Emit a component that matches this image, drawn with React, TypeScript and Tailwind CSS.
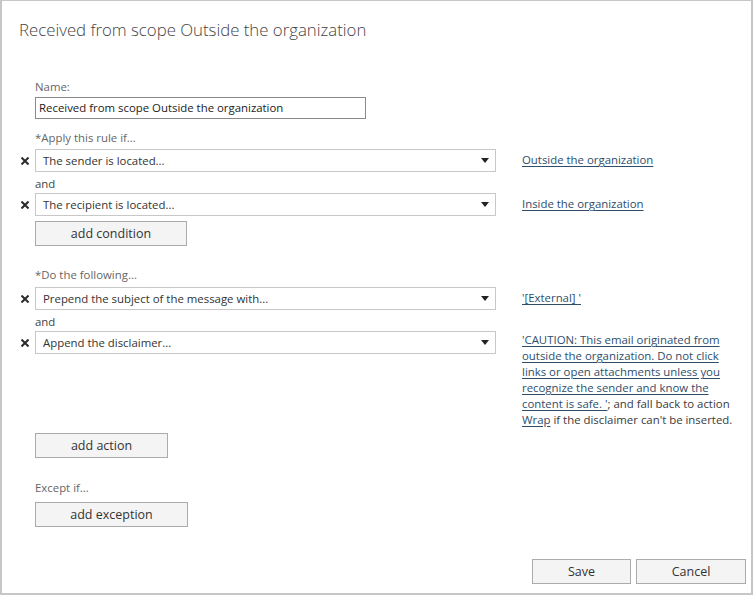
import React from 'react';

const font = { fontFamily: '"Open Sans", "Noto Sans", sans-serif' };

function RemoveMark() {
  return (
    <svg width="8" height="8" viewBox="0 0 8 8" className="block">
      <path d="M1.2 1.2 L6.8 6.8 M6.8 1.2 L1.2 6.8" stroke="#2b2b2b" strokeWidth="2" strokeLinecap="square" />
    </svg>
  );
}

function Select({ label }: { label: string }) {
  return (
    <div className="flex h-[23px] w-[461px] items-center justify-between border border-[#c8c8c8] bg-white pl-[7px] pr-[6px] text-[11.4px] text-[#333]">
      <span>{label}</span>
      <svg width="8" height="5" viewBox="0 0 8 5" className="block">
        <path d="M0 0 H8 L4 5 Z" fill="#222" />
      </svg>
    </div>
  );
}

function Row({ label, top = 'pt-[3px]', children }: { label: string; top?: string; children?: React.ReactNode }) {
  return (
    <div className="flex items-start">
      <div className="flex h-[23px] w-[33px] items-center pl-[19px]">
        <RemoveMark />
      </div>
      <Select label={label} />
      <div className={`ml-[26px] ${top} text-[11.4px] leading-[16px] text-[#3a3a3a]`}>{children}</div>
    </div>
  );
}

function Link({ children }: { children: React.ReactNode }) {
  return <span className="text-[#2e4e6b] underline underline-offset-2">{children}</span>;
}

function GreyButton({ label, width }: { label: string; width: string }) {
  return (
    <button className={`block h-[25px] ${width} border border-[#ababab] bg-[#f4f4f4] text-[12.5px] leading-[23px] text-[#333]`}>
      {label}
    </button>
  );
}

function Label({ text, color = 'text-[#666]' }: { text: string; color?: string }) {
  return <div className={`pl-[33px] text-[11.4px] leading-[16px] ${color}`}>{text}</div>;
}

export default function App() {
  return (
    <div style={font} className="flex h-[595px] w-[753px] flex-col border-t border-l-2 border-r-2 border-b-2 border-[#c6c6c6] bg-white">
      <h1 className="pl-[17px] pt-[16px] text-[16.8px] font-light leading-[26px] text-[#444]">
        Received from scope Outside the organization
      </h1>

      <div className="mt-[36px]">
        <Label text="Name:" />
      </div>
      <div className="ml-[33px] mt-[2px] flex h-[22px] w-[331px] items-center border border-[#8a8a8a] px-[3px] text-[11.4px] text-[#222]">
        Received from scope Outside the organization
      </div>

      <div className="mt-[11px]">
        <Label text="*Apply this rule if..." />
      </div>
      <div className="mt-[3px]">
        <Row label="The sender is located...">
          <Link>Outside the organization</Link>
        </Row>
      </div>
      <div className="mt-[4px]">
        <Label text="and" color="text-[#444]" />
      </div>
      <div className="mt-[1px]">
        <Row label="The recipient is located...">
          <Link>Inside the organization</Link>
        </Row>
      </div>
      <div className="ml-[33px] mt-[5px] flex">
        <GreyButton label="add condition" width="w-[152px]" />
      </div>

      <div className="mt-[21px]">
        <Label text="*Do the following..." />
      </div>
      <div className="mt-[4px]">
        <Row label="Prepend the subject of the message with...">
          <Link>'[External] '</Link>
        </Row>
      </div>
      <div className="mt-[4px]">
        <Label text="and" color="text-[#444]" />
      </div>
      <div className="mt-[1px]">
        <Row label="Append the disclaimer..." top="pt-[1px]">
          <div className="whitespace-nowrap">
            <Link>'CAUTION: This email originated from</Link>
            <br />
            <Link>outside the organization. Do not click</Link>
            <br />
            <Link>links or open attachments unless you</Link>
            <br />
            <Link>recognize the sender and know the</Link>
            <br />
            <Link>content is safe. '</Link>; and fall back to action
            <br />
            <Link>Wrap</Link> if the disclaimer can't be inserted.
          </div>
        </Row>
      </div>
      <div className="ml-[33px] mt-[5px] flex">
        <GreyButton label="add action" width="w-[133px]" />
      </div>

      <div className="mt-[22px]">
        <Label text="Except if..." />
      </div>
      <div className="ml-[33px] mt-[6px] flex">
        <GreyButton label="add exception" width="w-[153px]" />
      </div>

      <div className="mt-auto flex justify-end gap-[5px] pb-[9px] pr-[5px]">
        <GreyButton label="Save" width="w-[99px]" />
        <GreyButton label="Cancel" width="w-[110px]" />
      </div>
    </div>
  );
}
